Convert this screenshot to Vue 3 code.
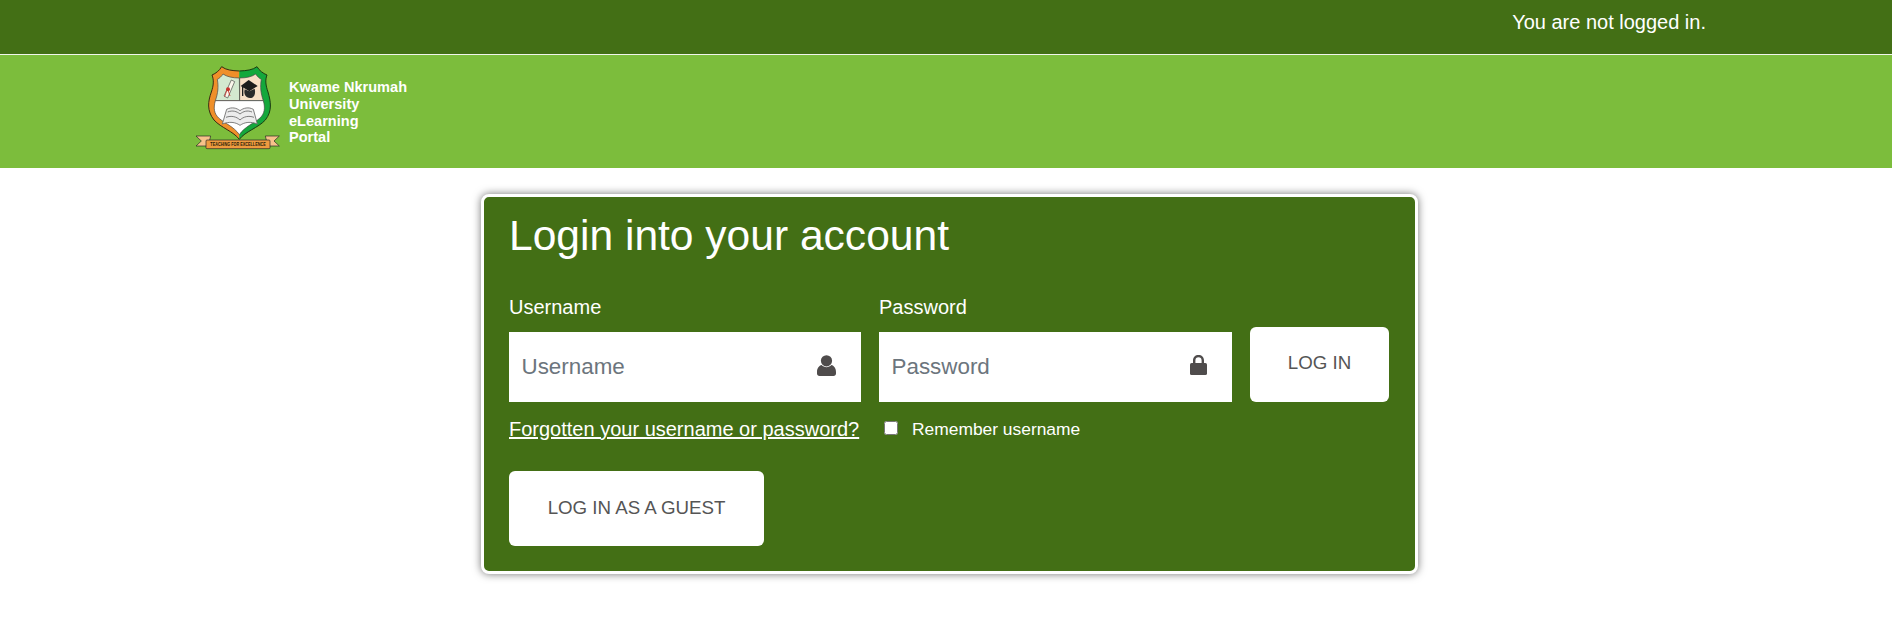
<script setup>
const title = 'Login into your account'
</script>

<template>
  <div class="page">
    <div class="topbar"><span class="status">You are not logged in.</span></div>
    <header class="brandbar">
      <svg class="logo" viewBox="0 0 300 285" width="100" height="95" aria-hidden="true">
        <defs>
          <clipPath id="leftHalf"><rect x="0" y="0" width="148" height="285" /></clipPath>
          <clipPath id="rightHalf"><rect x="148" y="0" width="152" height="285" /></clipPath>
        </defs>
        <path d="M148 33C125 32 108 30 95 20C88 32 78 40 66 45C72 60 71 76 64 96C54 124 50 152 72 180C94 204 130 214 148 238C166 214 204 204 226 180C248 152 242 124 234 96C227 76 225 60 231 45C219 40 208 32 201 20C188 30 170 32 148 33Z" fill="#ef8f2a" stroke="#3a2a12" stroke-width="3" clip-path="url(#leftHalf)" />
        <path d="M148 33C125 32 108 30 95 20C88 32 78 40 66 45C72 60 71 76 64 96C54 124 50 152 72 180C94 204 130 214 148 238C166 214 204 204 226 180C248 152 242 124 234 96C227 76 225 60 231 45C219 40 208 32 201 20C188 30 170 32 148 33Z" fill="#14a83c" stroke="#1c3a12" stroke-width="3" clip-path="url(#rightHalf)" />
        <path d="M148 54C128 54 110 50 99 42C94 50 88 55 82 58C86 80 84 100 76 122H149Z" fill="#d3e9cf" stroke="#444" stroke-width="2" />
        <path d="M149 54C170 54 186 50 197 42C202 50 208 55 214 58C210 80 212 100 220 122H149Z" fill="#f8dfc6" stroke="#444" stroke-width="2" />
        <path d="M76 122H220C226 145 224 160 210 174C192 190 164 200 148 224C132 200 104 190 86 174C72 160 70 145 76 122Z" fill="#fff" stroke="#444" stroke-width="2" />
        <g fill="#ececec" stroke="#666" stroke-width="2.5">
          <path d="M97 192L110 148C126 140 140 144 150 152C160 144 176 140 190 148L202 192C182 184 164 186 150 196C136 186 118 184 97 192Z" />
          <path d="M113 156C128 150 140 154 150 162M186 156C172 150 160 154 150 162M108 172C124 166 140 170 150 180M192 172C176 166 160 170 150 180" fill="none" />
        </g>
        <path d="M102 108L124 60L134 65L113 114Z" fill="#fbf8ec" stroke="#444" stroke-width="2" />
        <circle cx="114" cy="88" r="6" fill="#c8322a" />
        <path d="M110 92L104 110M115 93L120 108" stroke="#c8322a" stroke-width="2.5" fill="none" />
        <path d="M152 78L176 60L203 78L178 94Z" fill="#1c1c1c" />
        <path d="M164 88C160 104 168 114 180 114C192 114 198 102 194 86L178 94Z" fill="#2b2b2b" />
        <path d="M158 80V108" stroke="#1c1c1c" stroke-width="4" />
        <path d="M18 228H62L58 244L62 258H18L34 243Z" fill="#f7c28a" stroke="#222" stroke-width="2" />
        <path d="M268 228H226L230 244L226 258H268L252 243Z" fill="#f7c28a" stroke="#222" stroke-width="2" />
        <rect x="48" y="240" width="192" height="26" rx="3" fill="#ee9a3f" stroke="#222" stroke-width="2" />
        <text x="144" y="259" text-anchor="middle" textLength="166" lengthAdjust="spacingAndGlyphs" class="motto">TEACHING FOR EXCELLENCE</text>
      </svg>
      <div class="brandname">Kwame Nkrumah<br />University<br />eLearning<br />Portal</div>
    </header>

    <main class="card">
      <h1 class="title">{{ title }}</h1>
      <form class="form" @submit.prevent>
        <label class="label" for="u">Username</label>
        <label class="label" for="p">Password</label>
        <span></span>

        <div class="field">
          <input id="u" class="input" type="text" placeholder="Username" />
          <svg class="ficon" viewBox="0 0 19 21" width="19" height="21" aria-hidden="true">
            <circle cx="9.5" cy="5.8" r="5.6" />
            <path d="M0 17C0 13 2.2 10.5 4.6 10C6 11.4 7.6 12.2 9.5 12.2C11.4 12.2 13 11.4 14.4 10C16.8 10.5 19 13 19 17V18.5C19 20 18 21 16.5 21H2.5C1 21 0 20 0 18.5Z" />
          </svg>
        </div>
        <div class="field">
          <input id="p" class="input" type="password" placeholder="Password" />
          <svg class="ficon ficon-lock" viewBox="0 0 17 21" width="17" height="21" aria-hidden="true">
            <path d="M3 9V6.5C3 3 5.3 1 8.5 1C11.7 1 14 3 14 6.5V9H11.6V6.5C11.6 4.5 10.4 3.3 8.5 3.3C6.6 3.3 5.4 4.5 5.4 6.5V9Z" />
            <rect x="0" y="9" width="17" height="12" rx="1.6" />
          </svg>
        </div>
        <button class="btn btn-login" type="submit">LOG IN</button>

        <a class="forgot" href="#" @click.prevent>Forgotten your username or password?</a>
        <label class="remember"><input class="check" type="checkbox" /><span>Remember username</span></label>
      </form>
      <button class="btn btn-guest" type="button">LOG IN AS A GUEST</button>
    </main>
  </div>
</template>

<style scoped>
.page {
  font-family: "Liberation Sans", Arial, sans-serif;
  color: #fff;
  height: 619px;
  overflow: hidden;
}
.topbar {
  height: 42px;
  background: #436f15;
  border-bottom: 1px solid #f1f6ec;
  display: flex;
  justify-content: flex-end;
  padding: 12px 186px 0 0;
  font-size: 20px;
  line-height: 20px;
}
.brandbar {
  height: 113px;
  background: #7cbd3c;
  display: flex;
  align-items: flex-start;
  padding-left: 190px;
  box-sizing: border-box;
}
.logo {
  margin-top: 5px;
  flex: none;
}
.motto {
  font-family: "Liberation Sans", Arial, sans-serif;
  font-size: 15px;
  font-weight: 700;
  fill: #2a1a08;
}
.brandname {
  margin: 24px 0 0 -1px;
  font-size: 14.56px;
  line-height: 16.8px;
  font-weight: 700;
}
.card {
  box-sizing: border-box;
  width: 937px;
  height: 380px;
  margin: 26px 0 0 481px;
  padding: 14px 26px 0 25px;
  background: #436f15;
  border: 3px solid #fff;
  border-radius: 8px;
  box-shadow: 0 0 8px rgba(0, 0, 0, 0.55);
}
.title {
  margin: 0;
  font-size: 42.56px;
  line-height: 48px;
  font-weight: 400;
}
.form {
  margin-top: 36px;
  display: grid;
  grid-template-columns: 352px 353px 139px;
  column-gap: 18px;
  align-items: end;
}
.label {
  font-size: 20px;
  line-height: 24px;
  margin-bottom: 8px;
  grid-row: 1;
}
.field {
  position: relative;
  grid-row: 2;
}
.input {
  display: block;
  box-sizing: border-box;
  width: 100%;
  height: 70px;
  border: 0;
  border-radius: 0;
  padding: 0 12.5px;
  background: #fff;
  font: 22.4px "Liberation Sans", Arial, sans-serif;
  color: #495057;
  outline: none;
}
.input::placeholder {
  color: #6c757d;
  opacity: 1;
}
.ficon {
  position: absolute;
  right: 25px;
  top: 23px;
  fill: #4f4c4c;
}
.ficon-lock {
  right: 25px;
  top: 22px;
}
.btn {
  box-sizing: border-box;
  border: 0;
  border-radius: 6px;
  background: #fff;
  color: #555;
  font: 18.72px "Liberation Sans", Arial, sans-serif;
  cursor: pointer;
}
.btn-login {
  grid-row: 2;
  height: 75px;
  padding: 0 0 3px;
}
.forgot {
  grid-row: 3;
  color: #fff;
  font-size: 20px;
  line-height: 24px;
  margin-top: 15px;
  white-space: nowrap;
}
.remember {
  grid-row: 3;
  display: flex;
  align-items: center;
  margin-top: 15px;
  font-size: 17.4px;
  line-height: 24px;
}
.check {
  width: 14px;
  height: 14px;
  margin: 0 14px 3px 5px;
  flex: none;
}
.btn-guest {
  display: block;
  width: 255px;
  height: 75px;
  margin-top: 30px;
  padding-bottom: 3px;
}
</style>

<style>
html, body {
  margin: 0;
  background: #fff;
}
</style>
